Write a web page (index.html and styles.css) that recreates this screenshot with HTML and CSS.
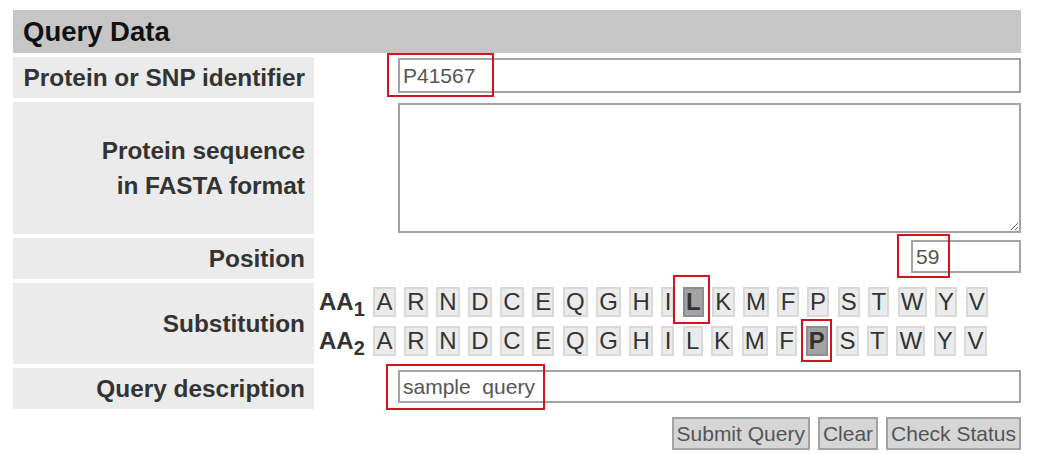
FILE: index.html
```html
<!DOCTYPE html>
<html>
<head>
<meta charset="utf-8">
<link rel="stylesheet" href="styles.css">
</head>
<body>
<div class="form">
  <div class="head">Query Data</div>

  <div class="label">Protein or SNP identifier</div>
  <div class="value">
    <span class="mark-wrap offset">
      <input class="text wide" type="text" value="P41567">
      <span class="mark m-id"></span>
    </span>
  </div>

  <div class="label tall">Protein sequence<br>in FASTA format</div>
  <div class="value">
    <textarea class="area"></textarea>
  </div>

  <div class="label">Position</div>
  <div class="value right">
    <span class="mark-wrap">
      <input class="text pos" type="text" value="59">
      <span class="mark m-pos"></span>
    </span>
  </div>

  <div class="label">Substitution</div>
  <div class="value subs">
    <div class="aa-row">
      <span class="aa-label">AA<sub>1</sub></span>
      <span class="aa">A</span><span class="aa">R</span><span class="aa">N</span><span class="aa">D</span><span class="aa">C</span><span class="aa">E</span><span class="aa">Q</span><span class="aa">G</span><span class="aa">H</span><span class="aa">I</span><span class="aa sel">L<span class="mark m-l"></span></span><span class="aa">K</span><span class="aa">M</span><span class="aa">F</span><span class="aa">P</span><span class="aa">S</span><span class="aa">T</span><span class="aa">W</span><span class="aa">Y</span><span class="aa">V</span>
    </div>
    <div class="aa-row">
      <span class="aa-label">AA<sub>2</sub></span>
      <span class="aa">A</span><span class="aa">R</span><span class="aa">N</span><span class="aa">D</span><span class="aa">C</span><span class="aa">E</span><span class="aa">Q</span><span class="aa">G</span><span class="aa">H</span><span class="aa">I</span><span class="aa">L</span><span class="aa">K</span><span class="aa">M</span><span class="aa">F</span><span class="aa sel">P<span class="mark m-p"></span></span><span class="aa">S</span><span class="aa">T</span><span class="aa">W</span><span class="aa">Y</span><span class="aa">V</span>
    </div>
  </div>

  <div class="label">Query description</div>
  <div class="value">
    <span class="mark-wrap offset">
      <input class="text wide desc" type="text" value="sample  query">
      <span class="mark m-desc"></span>
    </span>
  </div>

  <div class="buttons">
    <button class="btn">Submit Query</button>
    <button class="btn">Clear</button>
    <button class="btn">Check Status</button>
  </div>
</div>
</body>
</html>
```

FILE: styles.css
```css
html, body {
  margin: 0;
  padding: 0;
  background: #fff;
}

body {
  font-family: "Liberation Sans", Arial, sans-serif;
}

.form {
  margin: 10px 0 0 13px;
  width: 1008px;
  display: grid;
  grid-template-columns: 301px 703px;
  column-gap: 4px;
  row-gap: 4px;
  grid-template-rows: 43px 41px 132px 41px 81px 41px auto;
}

.head {
  grid-column: 1 / span 2;
  background: #c6c6c6;
  color: #111;
  font-weight: bold;
  font-size: 27.5px;
  line-height: 43px;
  padding-left: 10px;
}

.label {
  background: #ebebeb;
  color: #333;
  font-weight: bold;
  font-size: 24.4px;
  line-height: 35px;
  text-align: right;
  padding-right: 9px;
  display: flex;
  align-items: center;
  justify-content: flex-end;
}

.value {
  display: flex;
  align-items: flex-start;
}

.value.right {
  justify-content: flex-end;
}

.mark-wrap {
  position: relative;
  display: block;
}

.mark-wrap.offset {
  margin-left: 80px;
}

.text {
  box-sizing: border-box;
  border: 2px solid #a3a3a3;
  background: #fff;
  color: #555;
  font-family: "Liberation Sans", Arial, sans-serif;
  font-size: 21px;
  padding: 0 0 0 3px;
  margin: 1px 0 0 0;
  outline: none;
  display: block;
}

.text.wide {
  width: 623px;
  height: 35px;
}

.text.desc {
  height: 33px;
  margin-top: 2px;
}

.text.pos {
  width: 110px;
  height: 33px;
  margin-top: 2px;
}

.area {
  box-sizing: border-box;
  margin: 1px 0 0 80px;
  width: 623px;
  height: 130px;
  border: 2px solid #a3a3a3;
  background: #fff;
  resize: both;
  display: block;
}

.mark {
  position: absolute;
  border: 2px solid #d4141c;
  box-sizing: border-box;
  pointer-events: none;
}

.m-id {
  left: -11px;
  top: -4px;
  width: 107px;
  height: 44px;
}

.m-pos {
  left: -14px;
  top: -4px;
  width: 53px;
  height: 44px;
}

.m-desc {
  left: -12px;
  top: -4px;
  width: 159px;
  height: 46px;
}

.subs {
  flex-direction: column;
  padding-top: 4px;
  row-gap: 9px;
}

.aa-row {
  display: flex;
  align-items: center;
  gap: 8.3px;
  height: 30px;
}

.aa-label {
  color: #333;
  font-weight: bold;
  font-size: 24px;
  width: 46px;
  margin-left: 1px;
  white-space: nowrap;
}

.aa-label sub {
  font-size: 20px;
  line-height: 0;
  vertical-align: -6px;
}

.aa {
  position: relative;
  box-sizing: border-box;
  height: 30px;
  line-height: 26px;
  padding: 0 1.2px;
  background: #ebebeb;
  border: 2px solid #d9d9d9;
  color: #333;
  font-size: 24px;
}

.aa.sel {
  background: #a3a3a3;
  border-color: #8e8e8e;
  font-weight: bold;
  color: #333;
}

.m-l {
  left: -12px;
  top: -14px;
  width: 37px;
  height: 49px;
}

.m-p {
  left: -7px;
  top: -9px;
  width: 31px;
  height: 43px;
}

.buttons {
  grid-column: 1 / span 2;
  display: flex;
  justify-content: flex-end;
  gap: 8px;
  margin-top: 4px;
}

.btn {
  box-sizing: border-box;
  height: 33px;
  padding: 0 3px;
  background: #d6d6d6;
  border: 2px solid #a3a3a3;
  color: #555;
  font-family: "Liberation Sans", Arial, sans-serif;
  font-size: 21px;
  margin: 0;
}
```
